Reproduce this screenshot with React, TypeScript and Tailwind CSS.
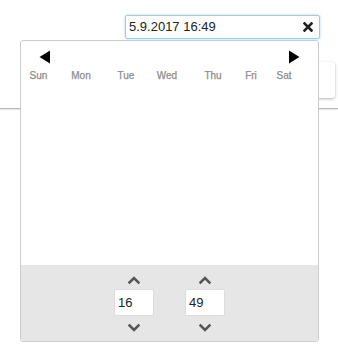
const days = [
  { label: "Sun", w: "w-[35px]" },
  { label: "Mon", w: "w-[50px]" },
  { label: "Tue", w: "w-[40px]" },
  { label: "Wed", w: "w-[42px]" },
  { label: "Thu", w: "w-[50px]" },
  { label: "Fri", w: "w-[26px]" },
  { label: "Sat", w: "w-[40px]" },
];

function Chevron({ up }: { up?: boolean }) {
  return (
    <svg width="12" height="12" viewBox="0 0 12 12" className="block">
      <polyline
        points={up ? "1.5,8.5 6,4 10.5,8.5" : "1.5,3.5 6,8 10.5,3.5"}
        fill="none"
        stroke="#555"
        strokeWidth="2.6"
        strokeLinecap="square"
      />
    </svg>
  );
}

function TimeColumn({ value }: { value: string }) {
  return (
    <div className="flex flex-col items-center">
      <Chevron up />
      <div className="mt-[3px] flex h-[27px] w-[40px] items-center rounded-[2px] border border-[#dcdcdc] bg-white pl-[3px] text-[13px] text-[#222]">
        {value}
      </div>
      <div className="mt-[6px]">
        <Chevron />
      </div>
    </div>
  );
}

export default function App() {
  return (
    <div className="relative h-[351px] w-[338px] overflow-hidden bg-white font-['Liberation_Sans',Arial,sans-serif]">
      {/* field */}
      <div className="flex justify-end pr-[18px] pt-[15px]">
        <div className="flex h-[24px] w-[195px] items-center justify-between rounded-[2px] border border-[#9ecaed] pl-[3px] pr-[6px] text-[13px] text-[#222] shadow-[0_0_3px_rgba(158,202,237,0.8)]">
          <span>5.9.2017 16:49</span>
          <svg width="10" height="10" viewBox="0 0 10 10">
            <path d="M1.5 1.5 L8.5 8.5 M8.5 1.5 L1.5 8.5" stroke="#222" strokeWidth="2.6" strokeLinecap="square" />
          </svg>
        </div>
      </div>

      {/* page content behind popup */}
      <div className="mt-[23px] flex justify-end pr-[3px]">
        <div className="h-[36px] w-[60px] rounded-[3px] bg-white shadow-[0_1px_3px_rgba(0,0,0,0.3)]" />
      </div>
      <div className="mt-[10px] h-[1px] w-full bg-[#b5b5b5] shadow-[0_1px_1px_rgba(0,0,0,0.12)]" />

      {/* picker popup */}
      <div className="absolute left-[20px] top-[40px] flex h-[302px] w-[299px] flex-col rounded-[3px] border border-[#ccc] bg-white">
        <div className="flex items-center justify-between px-[18px] pt-[9px]">
          <svg width="12" height="14" viewBox="0 0 12 14">
            <polygon points="11,0.5 11,13.5 0.5,7" fill="#000" />
          </svg>
          <svg width="12" height="14" viewBox="0 0 12 14">
            <polygon points="1,0.5 1,13.5 11.5,7" fill="#000" />
          </svg>
        </div>
        <div className="mt-[6px] flex">
          {days.map((d) => (
            <div key={d.label} className={`${d.w} text-center text-[10px] leading-[12px] text-[#8c8c8c] [-webkit-text-stroke:0.25px_#8c8c8c]`}>
              {d.label}
            </div>
          ))}
        </div>
        <div className="flex-1" />
        <div className="flex h-[76px] justify-center gap-[31px] rounded-b-[3px] bg-[#e6e6e6] pt-[9px]">
          <TimeColumn value="16" />
          <TimeColumn value="49" />
        </div>
      </div>
    </div>
  );
}
